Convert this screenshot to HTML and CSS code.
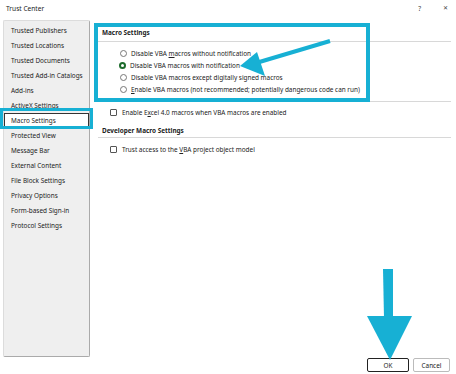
FILE: index.html
```html
<!DOCTYPE html>
<html lang="en">
<head>
    <meta charset="UTF-8" />
    <title>Trust Center</title>
    <link rel="stylesheet" href="styles.css">
</head>
<body>

<div class="janela">
    <div class="titulo">
        <span>Trust Center</span>
        <span class="botoes-titulo"><span>?</span><span class="fechar">&#x2715;</span></span>
    </div>

    <div class="corpo">
        <ul class="nav">
            <li>Trusted Publishers</li>
            <li>Trusted Locations</li>
            <li>Trusted Documents</li>
            <li>Trusted Add-in Catalogs</li>
            <li>Add-ins</li>
            <li>ActiveX Settings</li>
            <li class="ativo">Macro Settings</li>
            <li>Protected View</li>
            <li>Message Bar</li>
            <li>External Content</li>
            <li>File Block Settings</li>
            <li>Privacy Options</li>
            <li>Form-based Sign-in</li>
            <li>Protocol Settings</li>
        </ul>

        <div class="conteudo">
            <div class="secao">
                <h2>Macro Settings</h2>
                <div class="opcoes">
                    <div class="linha"><span class="radio"></span><span>Disable VBA <u>m</u>acros without notification</span></div>
                    <div class="linha"><span class="radio marcado"></span><span>Disable VBA macros with notification</span></div>
                    <div class="linha"><span class="radio"></span><span>Disable VBA macros except digitally signed macros</span></div>
                    <div class="linha"><span class="radio"></span><span><u>E</u>nable VBA macros (not recommended; potentially dangerous code can run)</span></div>
                </div>
                <div class="sep"></div>
                <div class="linha check-linha"><span class="check"></span><span>Enable E<u>x</u>cel 4.0 macros when VBA macros are enabled</span></div>
            </div>

            <div class="secao">
                <h2>Developer Macro Settings</h2>
                <div class="linha check-linha"><span class="check"></span><span>Trust access to the <u>V</u>BA project object model</span></div>
            </div>
        </div>
    </div>

    <div class="rodape">
        <button class="btn foco">OK</button>
        <button class="btn">Cancel</button>
    </div>
</div>

<!-- destaques -->
<div class="destaque destaque-nav"></div>
<div class="destaque destaque-macro"></div>
<svg class="setas" width="456" height="374" viewBox="0 0 456 374">
    <line x1="330" y1="41" x2="256" y2="63" stroke="#17b0d4" stroke-width="4" />
    <polygon points="240,66 257,52 265,76" fill="#17b0d4" />
    <polygon points="383,269 393,269 393,318 384,318" fill="#17b0d4" />
    <polygon points="367,316 412,316 390,360" fill="#17b0d4" />
</svg>

</body>
</html>
```

FILE: styles.css
```css
body {
    margin: 0;
    background: white;
    font-family: "Noto Sans", "Open Sans", sans-serif;
    font-size: 6.4px;
    color: #222;
}
.janela {
    width: 456px;
    height: 374px;
    display: flex;
    flex-direction: column;
}
.titulo {
    height: 20px;
    display: flex;
    justify-content: space-between;
    align-items: center;
    padding: 0 8px 4px 6px;
    box-sizing: border-box;
    font-size: 6.6px;
}
.botoes-titulo {
    display: flex;
    gap: 22px;
    color: #444;
}
.fechar {
    font-size: 6px;
}
.corpo {
    display: flex;
    height: 337px;
}
.nav {
    list-style: none;
    margin: 0 0 0 3px;
    padding: 2px 0 0 0;
    width: 87px;
    box-sizing: border-box;
    background: #efefef;
    border: 1px solid #dcdcdc;
    border-right-color: #aaa;
    border-bottom-color: #aaa;
    border-radius: 2px;
}
.nav li {
    height: 15px;
    line-height: 15px;
    padding-left: 7px;
    white-space: nowrap;
}
.nav li.ativo {
    background: white;
    border: 1px solid #333;
    height: 13px;
    line-height: 13px;
    padding-left: 6px;
}
.conteudo {
    flex: 1;
    padding: 9px 5px 0 8px;
}
.secao h2 {
    margin: 0;
    font-size: 6.4px;
    font-weight: bold;
    padding: 0 0 4px 4px;
    height: 8px;
    line-height: 8px;
    border-bottom: 1px solid #d8d8d8;
}
.opcoes {
    padding: 5px 0 6px 22px;
}
.linha {
    height: 12px;
    display: flex;
    align-items: center;
    white-space: nowrap;
}
.radio {
    width: 5px;
    height: 5px;
    border: 0.8px solid #777;
    border-radius: 50%;
    margin-right: 4px;
}
.radio.marcado {
    border: 2px solid #1d6b2c;
    width: 3px;
    height: 3px;
    margin-left: -0.6px;
    margin-right: 3.6px;
}
.sep {
    border-top: 1px solid #d8d8d8;
}
.check-linha {
    padding-left: 12px;
    margin: 4px 0 9px;
}
.check {
    width: 5px;
    height: 5px;
    border: 0.8px solid #555;
    border-radius: 1px;
    margin-right: 5px;
}
.secao + .secao h2 {
    padding-bottom: 2px;
}
.secao + .secao .check-linha {
    margin-top: 5px;
}
.rodape {
    flex: 1;
    display: flex;
    justify-content: flex-end;
    align-items: flex-start;
    gap: 4px;
    padding: 1px 6px 0 0;
}
.btn {
    font-family: inherit;
    font-size: 6.4px;
    background: white;
    border: 1px solid #bbb;
    border-radius: 2px;
    width: 37px;
    height: 14px;
    padding: 0;
    color: #222;
}
.btn.foco {
    width: 42px;
    border: 1.5px solid #222;
}
.destaque {
    position: absolute;
    border: 4px solid #17b0d4;
    box-sizing: border-box;
}
.destaque-nav {
    left: 0;
    top: 108px;
    width: 93px;
    height: 21px;
    border-width: 3px;
}
.destaque-macro {
    left: 94px;
    top: 23px;
    width: 276px;
    height: 79px;
}
.setas {
    position: absolute;
    left: 0;
    top: 0;
    pointer-events: none;
}
```
